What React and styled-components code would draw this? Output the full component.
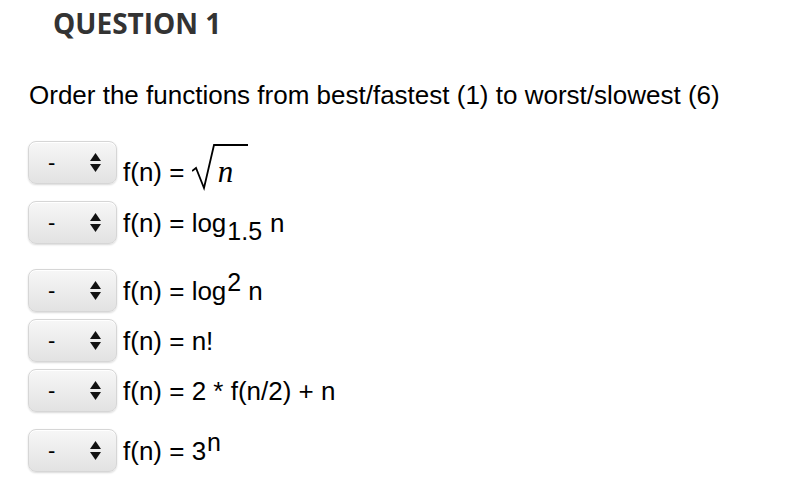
import React from 'react';
import styled, { createGlobalStyle } from 'styled-components';

const GlobalStyle = createGlobalStyle`
  body {
    margin: 0;
    background: #fff;
    font-family: "Liberation Sans", Arial, sans-serif;
    color: #000;
  }
`;

const Page = styled.div`
  width: 794px;
  height: 500px;
  overflow: hidden;
  padding: 0 0 0 28px;
  box-sizing: border-box;
`;

const Title = styled.h2`
  margin: 0;
  padding: 5px 0 0 25px;
  font-family: "Open Sans", sans-serif;
  font-weight: 700;
  font-size: 28px;
  line-height: 36px;
  color: #333;
`;

const Prompt = styled.p`
  margin: 38px 0 0 1px;
  font-size: 26px;
  line-height: 32px;
`;

const List = styled.div`
  display: flex;
  flex-direction: column;
  margin-top: 30px;
`;

const Row = styled.div`
  display: flex;
  align-items: center;
  gap: 6px;
  height: 43px;
  margin-top: ${p => p.$space}px;
`;

const Select = styled.div`
  box-sizing: border-box;
  width: 89px;
  height: 43px;
  display: flex;
  align-items: center;
  justify-content: space-between;
  padding: 0 15px 0 19px;
  border: 1px solid #d6d6d6;
  border-radius: 8px;
  background: linear-gradient(#f7f7f7, #e2e2e2);
  box-shadow: inset 0 1px 0 #fff, 0 1px 2px rgba(0, 0, 0, 0.15);
  font-size: 22px;
`;

const Formula = styled.span`
  font-size: 26px;
  line-height: 30px;
  white-space: pre;
  display: inline-flex;
  align-items: flex-end;
`;

const Sub = styled.span`
  font-size: 25px;
  position: relative;
  top: 8px;
  margin: 0 8px 0 1px;
`;

const Sup = styled.span`
  font-size: 25px;
  position: relative;
  top: -9px;
  margin: 0 7px 0 1px;
`;

const Radical = styled.span`
  display: inline-flex;
  align-items: flex-end;
  position: relative;
  top: 4px;
`;

const Radicand = styled.span`
  font-family: "Liberation Serif", "Times New Roman", serif;
  font-style: italic;
  font-size: 31px;
  line-height: 30px;
  margin-left: -30px;
  padding-right: 8px;
  position: relative;
  top: -4px;
`;

const Arrows = () => (
  <svg width="11" height="19" viewBox="0 0 11 19">
    <path d="M5.5 0 L11 8 H0 Z" fill="#111" />
    <path d="M0 11 H11 L5.5 19 Z" fill="#111" />
  </svg>
);

const Choice = () => (
  <Select>
    <span>-</span>
    <Arrows />
  </Select>
);

const SquareRoot = ({ children }) => (
  <Radical>
    <svg width="56" height="48" viewBox="0 0 56 48">
      <path
        d="M0 28 L4 25 L12 45 L22 2 L56 2"
        fill="none"
        stroke="#000"
        strokeWidth="1.8"
        strokeLinejoin="miter"
      />
    </svg>
    <Radicand>{children}</Radicand>
  </Radical>
);

export default function App() {
  return (
    <Page>
      <GlobalStyle />
      <Title>QUESTION 1</Title>
      <Prompt>Order the functions from best/fastest (1) to worst/slowest (6)</Prompt>
      <List>
        <Row $space={0}>
          <Choice />
          <Formula>
            {'f(n) = '}
            <SquareRoot>n</SquareRoot>
          </Formula>
        </Row>
        <Row $space={17}>
          <Choice />
          <Formula>
            {'f(n) = log'}
            <Sub>1.5</Sub>
            {'n'}
          </Formula>
        </Row>
        <Row $space={25}>
          <Choice />
          <Formula>
            {'f(n) = log'}
            <Sup>2</Sup>
            {'n'}
          </Formula>
        </Row>
        <Row $space={7}>
          <Choice />
          <Formula>f(n) = n!</Formula>
        </Row>
        <Row $space={7}>
          <Choice />
          <Formula>f(n) = 2 * f(n/2) + n</Formula>
        </Row>
        <Row $space={17}>
          <Choice />
          <Formula>
            {'f(n) = 3'}
            <Sup>n</Sup>
          </Formula>
        </Row>
      </List>
    </Page>
  );
}
